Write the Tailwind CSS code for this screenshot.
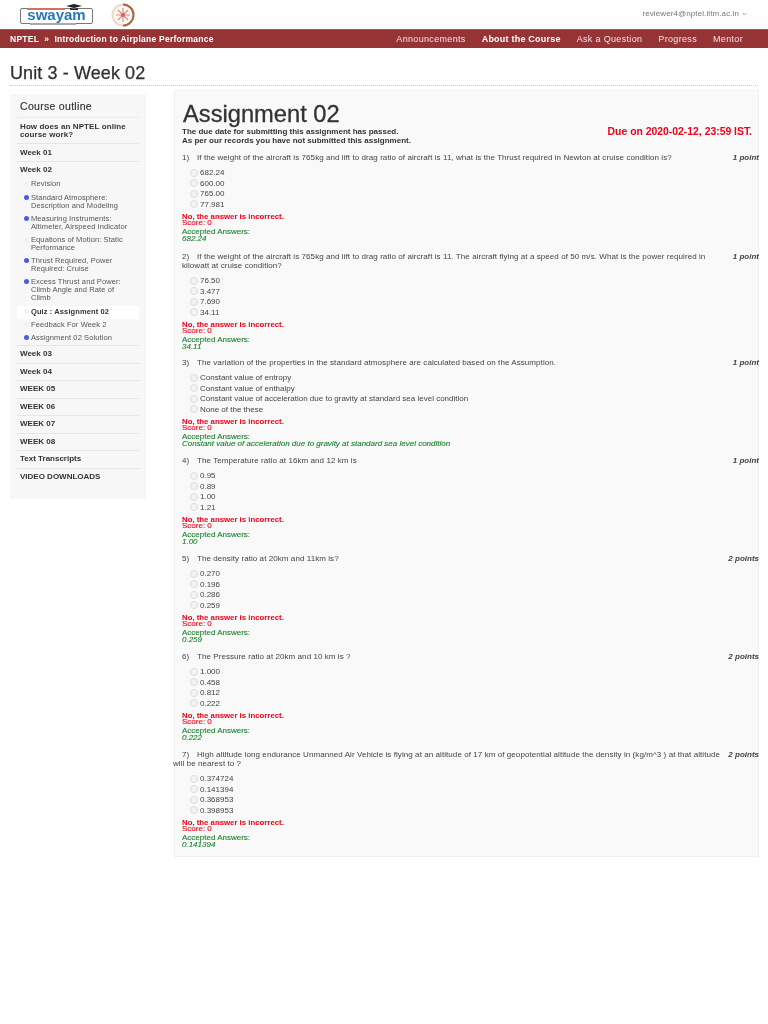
<!DOCTYPE html>
<html lang="en">
<head>
  <meta charset="UTF-8">
  <title>Unit 3 - Week 02</title>
  <script src="https://cdn.jsdelivr.net/npm/@tailwindcss/browser@4"></script>
</head>
<body class="bg-white min-h-[1024px] text-[#333] font-['Liberation_Sans',Arial,sans-serif]">
<div class="blur-[0.3px]">
  <header class="h-[29px] flex items-center justify-between pl-[20px] pr-[21px]">
    <div class="flex items-center gap-[17px]">
      <div class="relative w-[73px] h-[21px] mt-[1px]">
        <div class="absolute left-0 top-[3px] w-[73px] h-[16px] border border-[#777] rounded-[2px] flex justify-center">
          <span class="text-[15px] leading-[12px] font-bold text-[#2a76bd]">swayam</span>
        </div>
        <svg class="absolute left-[45px] -top-[1px] w-[18px] h-[6px]" viewBox="0 0 18 6"><path d="M1 2l8-2 8 2-8 2zM5 4l4 1 4-1v2H5z" fill="#222"/></svg>
        <div class="absolute left-[7px] top-[3px] w-[38px] h-[2px] bg-[#d9705c]"></div>
        <div class="absolute left-[10px] top-[18px] w-[46px] h-[2px] bg-[#aaa]"></div>
      </div>
      <svg class="w-[26px] h-[26px] mt-[1px]" viewBox="0 0 26 26">
        <circle cx="13" cy="13" r="10.5" fill="#fbf6f2" stroke="#e8dccb" stroke-width="2"/>
        <path d="M13 2.5a10.5 10.5 0 0 1 0 21" fill="none" stroke="#a9683f" stroke-width="2"/>
        <path d="M13 6v14M6 13h14M8 8l10 10M18 8L8 18" stroke="#dc8f86" stroke-width="1.2"/>
        <circle cx="13" cy="13" r="2" fill="#cf6a60"/>
      </svg>
    </div>
    <div class="flex items-center gap-[3px] text-[8px] text-[#777] tracking-[0.1px] mb-[1px]">
      reviewer4@nptel.iitm.ac.in
      <svg class="w-[5px] h-[4px]" viewBox="0 0 5 4"><path d="M.5 1l2 2 2-2" fill="none" stroke="#888" stroke-width=".7"/></svg>
    </div>
  </header>

  <nav class="h-[19px] bg-[#963435] flex items-center justify-between pl-[10px] pr-[25px] text-white text-[8.5px] border-t border-[#a85a5a]">
    <div class="font-bold tracking-[0.25px]">NPTEL &nbsp;»&nbsp; Introduction to Airplane Performance</div>
    <div class="flex gap-[16px] text-[9px] tracking-[0.33px] mt-[2px]">
      <span class="text-[#f3e3e3]">Announcements</span>
      <span class="font-bold tracking-[0.22px]">About the Course</span>
      <span class="text-[#f3e3e3]">Ask a Question</span>
      <span class="text-[#f3e3e3]">Progress</span>
      <span class="text-[#f3e3e3]">Mentor</span>
    </div>
  </nav>

  <h1 class="mx-[10px] mt-[15px] h-[23px] w-[748px] text-[18px] leading-[20px] tracking-[0.1px] text-[#2f2f2f] [-webkit-text-stroke:0.25px_#2f2f2f] border-b border-dotted border-[#ccc]">Unit 3 - Week 02</h1>

  <div class="flex items-start pl-[10px] pr-[9px] mt-[4px]">
    <aside class="w-[136px] mt-[4px] h-[405px] bg-[#f7f7f7] rounded-[2px] px-[7px] text-[8px] leading-[8px] shrink-0">
      <div class="h-[24px] flex items-center pl-[3px] text-[10.5px] tracking-[0.3px] [-webkit-text-stroke:0.15px_#333] border-b border-[#ececec]">Course outline</div>
      <div class="pt-[5px] pb-[4px] pl-[3px] font-bold border-b border-[#e6e6e6] tracking-[0.1px]">How does an NPTEL online course work?</div>
      <div class="h-[18px] flex items-center pl-[3px] font-bold border-b border-[#e6e6e6]">Week 01</div>
      <div class="h-[16px] flex items-center pl-[3px] font-bold">Week 02</div>
      <ul id="lessons" class="text-[#555] text-[7.5px] tracking-[0.1px]"></ul>
      <div id="weeks"></div>
    </aside>

    <main class="ml-[28px] w-[585px] h-[767px] bg-[#f9f9f9] border border-[#f0f0f0] px-[7px] text-[8px] leading-[9px] text-[#444]">
      <h2 class="mt-[12px] pl-[1px] text-[23.7px] leading-[22px] text-[#333] [-webkit-text-stroke:0.3px_#333]">Assignment 02</h2>
      <div class="flex justify-between items-start mt-[3px] font-bold text-[#333]">
        <div class="leading-[8.5px]">The due date for submitting this assignment has passed.<br>As per our records you have not submitted this assignment.</div>
        <div class="text-[10.4px] leading-[10px] text-[#f00018] -mr-[1px] -mt-[1px]">Due on 2020-02-12, 23:59 IST.</div>
      </div>
      <section id="questions" class="-mr-[8px] mt-[8px]"></section>
    </main>
  </div>
</div>

  <script id="data" type="application/json">
    {
      "lessons": [
        { "title": "Revision", "done": false, "h": "h-[14px]" },
        { "title": "Standard Atmosphere: Description and Modeling", "done": true, "h": "h-[21px]" },
        { "title": "Measuring Instruments: Altimeter, Airspeed Indicator", "done": true, "h": "h-[21px]" },
        { "title": "Equations of Motion: Static Performance", "done": false, "h": "h-[21px]" },
        { "title": "Thrust Required, Power Required: Cruise", "done": true, "h": "h-[21px]" },
        { "title": "Excess Thrust and Power: Climb Angle and Rate of Climb", "done": true, "h": "h-[30px]" },
        { "title": "Quiz : Assignment 02", "done": false, "h": "h-[13px]", "current": true },
        { "title": "Feedback For Week 2", "done": false, "h": "h-[13px]" },
        { "title": "Assignment 02 Solution", "done": true, "h": "h-[13px]" }
      ],
      "weeks": ["Week 03", "Week 04", "WEEK 05", "WEEK 06", "WEEK 07", "WEEK 08", "Text Transcripts", "VIDEO DOWNLOADS"],
      "questions": [
        { "text": "If the weight of the aircraft is 765kg and lift to drag ratio of aircraft is 11, what is the Thrust required in Newton at cruise condition is?", "points": "1 point", "options": ["682.24", "600.00", "765.00", "77.981"], "answer": "682.24", "h": "h-[99px]" },
        { "text": "If the weight of the aircraft is 765kg and lift to drag ratio of aircraft is 11. The aircraft flying at a speed of 50 m/s. What is the power required in kilowatt at cruise condition?", "points": "1 point", "options": ["76.50", "3.477", "7.690", "34.11"], "answer": "34.11", "h": "h-[106px]" },
        { "text": "The variation of the properties in the standard atmosphere are calculated based on the Assumption.", "points": "1 point", "options": ["Constant value of entropy", "Constant value of enthalpy", "Constant value of acceleration due to gravity at standard sea level condition", "None of the these"], "answer": "Constant value of acceleration due to gravity at standard sea level condition", "h": "h-[98px]" },
        { "text": "The Temperature ratio at 16km and 12 km is", "points": "1 point", "options": ["0.95", "0.89", "1.00", "1.21"], "answer": "1.00", "h": "h-[98px]" },
        { "text": "The density ratio at 20km and 11km is?", "points": "2 points", "options": ["0.270", "0.196", "0.286", "0.259"], "answer": "0.259", "h": "h-[98px]" },
        { "text": "The Pressure ratio at 20km and 10 km is ?", "points": "2 points", "options": ["1.000", "0.458", "0.812", "0.222"], "answer": "0.222", "h": "h-[98px]" },
        { "text": "High altitude long endurance Unmanned Air Vehicle is flying at an altitude of 17 km of geopotential altitude the density in (kg/m^3 ) at that altitude will be nearest to ?", "points": "2 points", "options": ["0.374724", "0.141394", "0.368953", "0.398953"], "answer": "0.141394", "h": "h-[98px]", "outdent": true }
      ]
    }
  </script>

  <script>
    const data = JSON.parse(document.getElementById('data').textContent);

    document.getElementById('lessons').innerHTML = data.lessons.map(l => `
      <li class="flex py-[2px] pl-[7px] pr-[6px] ${l.h} ${l.current ? 'bg-white font-bold text-[#333]' : ''}">
        <span class="w-[5px] h-[5px] mt-[1px] rounded-full mr-[2px] shrink-0 ${l.done ? 'bg-[#4a5bdc]' : 'bg-[#f2f2f2]'}"></span>
        <span>${l.title}</span>
      </li>`).join('');

    document.getElementById('weeks').innerHTML = data.weeks.map(w => `
      <div class="h-[17.5px] flex items-center pl-[3px] font-bold border-t border-[#e6e6e6]">${w}</div>`).join('');

    document.getElementById('questions').innerHTML = data.questions.map((q, i) => `
      <div class="${q.h}">
        <div class="flex justify-between ${q.outdent ? '-ml-[9px]' : ''}">
          <p class="tracking-[0.07px] ${q.outdent ? 'w-[552px]' : 'w-[535px]'}"><span class="inline-block w-[15px] ${q.outdent ? 'ml-[9px]' : ''}">${i + 1})</span>${q.text}</p>
          <b class="italic">${q.points}</b>
        </div>
        <ul class="mt-[6px] pl-[8px] leading-[10.5px]">
          ${q.options.map(o => `<li class="flex items-center"><i class="w-[8px] h-[8px] -mt-[1px] rounded-full border border-[#dcdcdc] bg-[#f3f3f3] mr-[2px]"></i>${o}</li>`).join('')}
        </ul>
        <p class="mt-[4px] leading-[6px] text-[#f00018] font-bold text-[7.8px]">No, the answer is incorrect.<br><span class="[-webkit-text-stroke:0.1px_#f00018] font-normal text-[8px]">Score: 0</span></p>
        <p class="mt-[2px] leading-[7px] text-[#16802b] [-webkit-text-stroke:0.1px_#16802b]">Accepted Answers:<br><i>${q.answer}</i></p>
      </div>`).join('');
  </script>
</body>
</html>
